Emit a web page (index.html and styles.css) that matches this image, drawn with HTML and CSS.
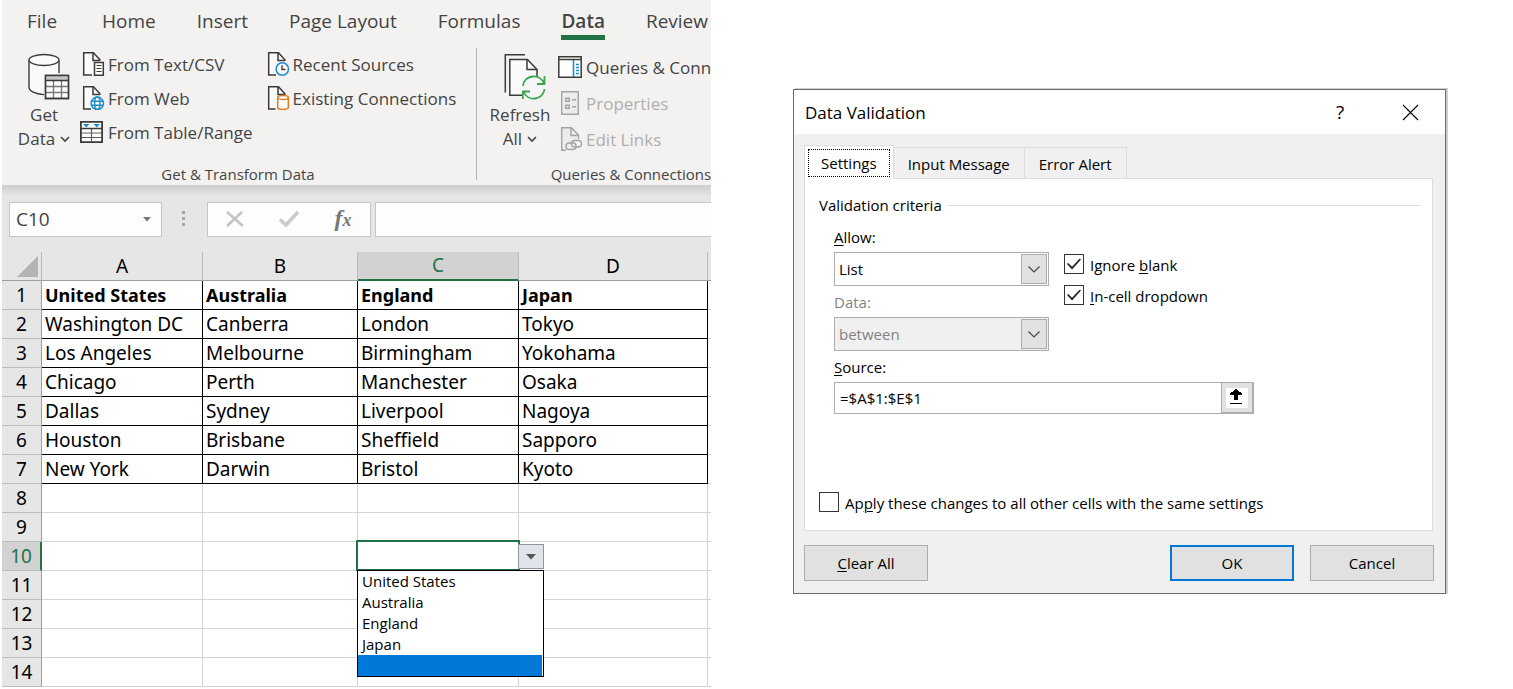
FILE: index.html
```html
<!DOCTYPE html>
<html lang="en">
<head>
<meta charset="utf-8">
<title>Data Validation</title>
<link rel="stylesheet" href="styles.css">
</head>
<body>
<main class="page">
  <section class="excel">
    <div class="ribbon">
      <nav class="tabs">
        <a class="tab" href="#">File</a>
        <a class="tab" href="#">Home</a>
        <a class="tab" href="#">Insert</a>
        <a class="tab" href="#">Page Layout</a>
        <a class="tab" href="#">Formulas</a>
        <a class="tab tab-active" href="#">Data</a>
        <a class="tab" href="#">Review</a>
      </nav>
      <div class="groups">
        <div class="group group-get">
          <div class="group-body">
            <button class="big-btn">
              <svg width="52" height="50" viewBox="-10 0 52 50" fill="none" stroke="#3b3a39" stroke-width="1.4">
                <path d="M1 7V31c0 6 7 9 16 10H30V7" fill="#fafafa" stroke="none"/>
                <path d="M1 7V34c0 4 6 7 15 7.600M31 7V20"/>
                <ellipse cx="16" cy="7" rx="15" ry="5.500" fill="#fafafa"/>
                <path d="M17.500 22.500H40.500V45.500H17.500Z" fill="#fff"/>
                <path d="M18 23H40V27H18Z" fill="#c8c6c4" stroke="none"/>
                <path d="M17.500 33.500H40.500M17.500 39.500H40.500M25.500 27V45M33.500 27V45" stroke="#797775"/>
                <path d="M17.500 22.500H40.500V45.500H17.500ZM17.500 27.500H40.500" />
              </svg>
              <span>Get</span>
              <span>Data <svg width="10" height="7" viewBox="0 0 10 7" fill="none" stroke="#444" stroke-width="1.600"><path d="M1 1L5 5L9 1"/></svg></span>
            </button>
            <div class="cmds">
              <button class="cmd">
                <svg width="26" height="24" viewBox="0 0 26 24" fill="none" stroke="#3b3a39" stroke-width="1.500">
                  <path d="M12 23H3.700V.800H13.500L20.500 8.500" fill="#fafafa"/><path d="M13 1V8.500H20"/>
                  <path d="M14.500 10.500H23.300V23.200H14.500Z" fill="#fff"/>
                  <path d="M16.500 13.500H21.500M16.500 16.500H21.500M16.500 19.500H21.500" stroke-width="1.200"/>
                </svg>From Text/CSV</button>
              <button class="cmd">
                <svg width="26" height="24" viewBox="0 0 26 24" fill="none" stroke="#3b3a39" stroke-width="1.500">
                  <path d="M11 23H3.700V.800H13.500L20.500 8.500" fill="#fafafa"/><path d="M13 1V8.500H20"/>
                  <g stroke="#1e8bcd" stroke-width="1.500"><circle cx="17.300" cy="17.300" r="6.200" fill="#fff"/><ellipse cx="17.300" cy="17.300" rx="2.700" ry="6.200"/><path d="M11.500 15.300H23M11.500 19.300H23"/></g>
                </svg>From Web</button>
              <button class="cmd">
                <svg width="26" height="24" viewBox="0 0 26 24" fill="none" stroke="#3b3a39" stroke-width="1.500">
                  <path d="M.8 1.800H22.200V22.200H.8Z" fill="#fff"/>
                  <path d="M1 13H22M1 17.500H22M11.500 9V22" stroke="#605e5c" stroke-width="1.200"/>
                  <path d="M.8 1.800H22.200V22.200H.8ZM.8 8.500H22"/>
                  <path d="M3 4H9.500L6.200 7.500ZM13.500 4H20L16.700 7.500Z" fill="#1e8bcd" stroke="none"/>
                </svg>From Table/Range</button>
            </div>
            <div class="cmds">
              <button class="cmd">
                <svg width="26" height="24" viewBox="0 0 26 24" fill="none" stroke="#3b3a39" stroke-width="1.500">
                  <path d="M11 23H3.700V.800H13.500L20.500 8.500" fill="#fafafa"/><path d="M13 1V8.500H20"/>
                  <circle cx="17.300" cy="17" r="6.200" fill="#fff" stroke="#1e8bcd"/><path d="M17 13.200V17.500H20.500" stroke-width="1.400"/>
                </svg>Recent Sources</button>
              <button class="cmd">
                <svg width="26" height="24" viewBox="0 0 26 24" fill="none" stroke="#3b3a39" stroke-width="1.500">
                  <path d="M10.500 23H3.700V.800H13.500L20.500 8.500" fill="#fafafa"/><path d="M13 1V8.500H20"/>
                  <g stroke="#e07b1a"><path d="M12.700 11.500V21.500c0 2.500 10.600 2.500 10.600 0V11.500" fill="#fff"/><ellipse cx="18" cy="11.500" rx="5.300" ry="2" fill="#fff"/></g>
                </svg>Existing Connections</button>
            </div>
          </div>
          <div class="group-label">Get &amp; Transform Data</div>
        </div>
        <div class="group group-queries">
          <div class="group-body">
            <button class="big-btn">
              <svg width="52" height="50" viewBox="-10 0 52 50" fill="none" stroke="#3b3a39" stroke-width="1.500">
                <path d="M21 1.700H1.300V39.500"/>
                <path d="M18 42.300H5.800V6.500H23.500L33 16.500V24" fill="#fafafa"/><path d="M23 6.500V16.500H33"/>
                <circle cx="29.500" cy="34.500" r="11" fill="#f6f6f6" stroke="none"/>
                <g stroke="#3aa655" stroke-width="1.800"><path d="M19 33c.5-11 17-13.500 21-2.500M40.500 23V31H33M40.500 36c-1 11-17 13.500-21 2.500M18.800 46V38.500H26"/></g>
              </svg>
              <span>Refresh</span>
              <span>All <svg width="10" height="7" viewBox="0 0 10 7" fill="none" stroke="#444" stroke-width="1.600"><path d="M1 1L5 5L9 1"/></svg></span>
            </button>
            <div class="cmds">
              <button class="cmd">
                <svg width="26" height="24" viewBox="0 0 26 24" fill="none" stroke="#3b3a39" stroke-width="1.500">
                  <path d="M.8 1.800H23.200V22.200H.8Z" fill="#fff"/><path d="M1 4.500H23"/>
                  <path d="M15.500 5V22" stroke="#1e8bcd" stroke-width="1.600"/><path d="M18 9.500H21M18 12.500H21M18 15.500H21M18 18.500H21" stroke="#1e8bcd"/>
                </svg>Queries &amp; Connections</button>
              <button class="cmd" disabled>
                <svg width="26" height="24" viewBox="0 0 26 24" fill="none" stroke="#a5a3a1" stroke-width="1.400">
                  <path d="M3.700 .8H20.300V23.200H3.700Z" fill="#ececec"/><path d="M7.700 7.200H11.300V10.200H7.700ZM7.700 14.200H11.300V17.200H7.700ZM14 8.700H18M14 15.700H18"/>
                </svg>Properties</button>
              <button class="cmd" disabled>
                <svg width="26" height="24" viewBox="0 0 26 24" fill="none" stroke="#a5a3a1" stroke-width="1.400">
                  <path d="M8 23.200H3.700V.800H13.500L20.500 8V12" fill="#ececec"/><path d="M13 1V8.500H20.500"/>
                  <rect x="8" y="16" width="10" height="6.500" rx="3.200"/><rect x="13.500" y="13.500" width="10" height="6.500" rx="3.200"/>
                </svg>Edit Links</button>
            </div>
          </div>
          <div class="group-label">Queries &amp; Connections</div>
        </div>
      </div>
    </div>

    <div class="formula-row">
      <div class="name-box">
        <input class="name-input" aria-label="Name box" value="C10">
        <svg width="8" height="5" viewBox="0 0 8 5"><path d="M0 0H8L4 4.500Z" fill="#777"/></svg>
      </div>
      <svg class="grip" width="4" height="16" viewBox="0 0 4 16" fill="#a6a6a6"><path d="M0 0H3V3H0ZM0 6H3V9H0ZM0 12H3V15H0Z"/></svg>
      <div class="fx-box">
        <button class="fx-btn" aria-label="Cancel entry"><svg width="20" height="18" viewBox="0 0 20 18" fill="none" stroke="#c3c3c3" stroke-width="2.500"><path d="M2 2L18 16M17 2L2 16"/></svg></button>
        <button class="fx-btn" aria-label="Enter"><svg width="20" height="18" viewBox="0 0 20 18" fill="none" stroke="#c9c9c9" stroke-width="3.500"><path d="M1 9.500L7 15L19 2"/></svg></button>
        <button class="fx-btn fx" aria-label="Insert function">f<span class="fx-x">x</span></button>
      </div>
      <input class="formula-input" aria-label="Formula bar">
    </div>

    <table class="sheet">
      <colgroup><col class="c-head"><col class="c-a"><col class="c-b"><col class="c-a"><col class="c-d"><col></colgroup>
      <thead>
        <tr><th class="corner"><svg width="21" height="21" viewBox="0 0 21 21"><path d="M21 0V21H0Z" fill="#b4b4b4"/></svg></th><th>A</th><th>B</th><th class="sel-col">C</th><th>D</th><th></th></tr>
      </thead>
      <tbody>
        <tr class="data bold"><th>1</th><td>United States</td><td>Australia</td><td>England</td><td>Japan</td><td></td></tr>
        <tr class="data"><th>2</th><td>Washington DC</td><td>Canberra</td><td>London</td><td>Tokyo</td><td></td></tr>
        <tr class="data"><th>3</th><td>Los Angeles</td><td>Melbourne</td><td>Birmingham</td><td>Yokohama</td><td></td></tr>
        <tr class="data"><th>4</th><td>Chicago</td><td>Perth</td><td>Manchester</td><td>Osaka</td><td></td></tr>
        <tr class="data"><th>5</th><td>Dallas</td><td>Sydney</td><td>Liverpool</td><td>Nagoya</td><td></td></tr>
        <tr class="data"><th>6</th><td>Houston</td><td>Brisbane</td><td>Sheffield</td><td>Sapporo</td><td></td></tr>
        <tr class="data"><th>7</th><td>New York</td><td>Darwin</td><td>Bristol</td><td>Kyoto</td><td></td></tr>
        <tr><th>8</th><td></td><td></td><td></td><td></td><td></td></tr>
        <tr><th>9</th><td></td><td></td><td></td><td></td><td></td></tr>
        <tr><th class="sel-row">10</th><td></td><td></td>
          <td class="active-cell">
            <div class="selection"></div>
            <button class="cell-drop" aria-label="Open list"><svg width="10" height="6" viewBox="0 0 10 6"><path d="M0 0H10L5 5.500Z" fill="#555"/></svg></button>
            <ul class="cell-list"><li>United States</li><li>Australia</li><li>England</li><li>Japan</li><li class="picked"></li></ul>
          </td><td></td><td></td></tr>
        <tr><th>11</th><td></td><td></td><td></td><td></td><td></td></tr>
        <tr><th>12</th><td></td><td></td><td></td><td></td><td></td></tr>
        <tr><th>13</th><td></td><td></td><td></td><td></td><td></td></tr>
        <tr><th>14</th><td></td><td></td><td></td><td></td><td></td></tr>
      </tbody>
    </table>
  </section>

  <section class="dialog" role="dialog" aria-labelledby="dlg-title">
    <header class="title-bar">
      <h1 class="title" id="dlg-title">Data Validation</h1>
      <button class="win-btn">?</button>
      <button class="win-btn" aria-label="Close"><svg width="17" height="17" viewBox="0 0 17 17" fill="none" stroke="#000" stroke-width="1.100"><path d="M1 1L16 16M16 1L1 16"/></svg></button>
    </header>
    <form class="dlg-body">
      <div class="dlg-tabs" role="tablist">
        <button type="button" class="dlg-tab dlg-tab-active" role="tab"><span class="focus">Settings</span></button>
        <button type="button" class="dlg-tab" role="tab">Input Message</button>
        <button type="button" class="dlg-tab" role="tab">Error Alert</button>
      </div>
      <div class="panel">
        <div class="legend">Validation criteria</div>
        <div class="criteria">
          <div class="fields">
            <label class="lbl" for="allow"><u>A</u>llow:</label>
            <div class="combo">
              <select class="combo-select" id="allow"><option>List</option></select>
              <span class="combo-arrow"><svg width="12" height="7" viewBox="0 0 12 7" fill="none" stroke="#444" stroke-width="1.200"><path d="M.5 .5L6 6L11.500 .5"/></svg></span>
            </div>
            <label class="lbl lbl-off" for="data">Data:</label>
            <div class="combo">
              <select class="combo-select" id="data" disabled><option>between</option></select>
              <span class="combo-arrow"><svg width="12" height="7" viewBox="0 0 12 7" fill="none" stroke="#444" stroke-width="1.200"><path d="M.5 .5L6 6L11.500 .5"/></svg></span>
            </div>
          </div>
          <div class="checks">
            <label class="check"><input class="box" type="checkbox" checked><span class="check-text">Ignore <u>b</u>lank</span></label>
            <label class="check"><input class="box" type="checkbox" checked><span class="check-text"><u>I</u>n-cell dropdown</span></label>
          </div>
        </div>
        <div class="source">
          <label class="lbl" for="source"><u>S</u>ource:</label>
          <div class="source-row">
            <input class="source-input" id="source" value="=$A$1:$E$1">
            <button type="button" class="pick" aria-label="Collapse dialog"><svg width="22" height="20" viewBox="0 0 22 20"><path d="M0 0H22V20H0Z" fill="#fff"/><path d="M9 1H11V2H12V3H13V4H15V5H16V7H12V12H8V7H4V5H5V4H7V3H8V2H9ZM4 15H16V16H4Z" fill="#000"/></svg></button>
          </div>
        </div>
        <label class="check apply"><input class="box" type="checkbox"><span class="check-text">Ap<u>p</u>ly these changes to all other cells with the same settings</span></label>
      </div>
      <div class="actions">
        <button type="button" class="btn btn-left"><span><u>C</u>lear All</span></button>
        <button type="button" class="btn btn-default">OK</button>
        <button type="button" class="btn">Cancel</button>
      </div>
    </form>
  </section>
</main>
</body>
</html>
```
FILE: styles.css
```css
* { box-sizing: border-box; }
body {
  margin: 0;
  background: #fff;
  color: #000;
  font-family: "Open Sans", "Noto Sans", sans-serif;
  font-size: 15px;
}
button, input, select { font: inherit; color: inherit; margin: 0; }
button { background: none; border: 0; padding: 0; white-space: nowrap; }
svg { flex: none; }
u { text-underline-offset: 2px; text-decoration-thickness: 1px; }

.page {
  display: grid;
  grid-template-columns: 709fr 653fr;
  align-items: start;
  gap: 82px;
  padding: 0 67px 0 2px;
}

/* Spreadsheet */
.excel { min-width: 0; overflow: hidden; }
.ribbon { background: #f3f2f1; color: #444; border-bottom: 1px solid #d2d2d2; }
.tabs { display: flex; gap: 41px; padding: 0 25px; height: 40px; }
.tab {
  flex: none;
  color: inherit;
  text-decoration: none;
  font-size: 19px;
  line-height: 42px;
  height: 40px;
}
.tab:first-child { margin-right: 4px; }
.tab-active { font-weight: 600; border-bottom: 5px solid #217346; }
.groups { display: flex; padding: 8px 0 5px; }
.group { flex: none; height: 132px; display: flex; flex-direction: column; justify-content: space-between; }
.group-get { width: 475px; border-right: 1px solid #b3b0ad; padding-left: 14px; }
.group-queries { padding-left: 13px; }
.group-body { display: flex; align-items: flex-start; gap: 8px; }
.group-get .group-label { padding-right: 16px; }
.group-label { font-size: 15px; line-height: 12px; text-align: center; }
.big-btn {
  display: flex;
  flex-direction: column;
  align-items: center;
  width: 56px;
  padding-top: 5px;
  font-size: 17px;
  line-height: 24px;
}
.group-queries .big-btn { width: 60px; }
.big-btn > span { display: flex; align-items: center; gap: 5px; }
.cmds { display: flex; flex-direction: column; margin-right: 4px; }
.cmd { display: flex; align-items: center; gap: 2px; height: 34px; padding-bottom: 2px; font-size: 17px; }
.group-queries .cmd { height: 36px; padding: 2px 0 0; }
.cmd:disabled { color: #b1afad; }

.formula-row {
  display: flex;
  align-items: center;
  height: 66px;
  padding-left: 7px;
  background: linear-gradient(#cfcfcf, #e6e6e6 10px);
}
.name-box {
  display: flex;
  align-items: center;
  width: 153px;
  height: 35px;
  padding-right: 10px;
  background: #fdfdfd;
  border: 1px solid #c6c6c6;
}
.name-input { flex: 1; min-width: 0; border: 0; background: none; padding: 0 6px; font-size: 19px; color: #444; }
.grip { margin: 0 21px 0 20px; }
.fx-box {
  display: flex;
  align-items: center;
  justify-content: space-around;
  width: 164px;
  height: 35px;
  background: #fdfdfd;
  border: 1px solid #c6c6c6;
}
.fx-btn { display: flex; justify-content: center; width: 30px; }
.fx { font: italic bold 24px "Liberation Serif", serif; color: #777; line-height: 28px; align-items: baseline; }
.fx-x { font-size: 18px; }
.formula-input {
  flex: 1;
  min-width: 0;
  height: 35px;
  margin-left: 4px;
  background: #fdfdfd;
  border: 1px solid #c6c6c6;
  border-right: 0;
}

.sheet { width: 100%; table-layout: fixed; border-collapse: separate; border-spacing: 0; font-family: "Noto Sans", sans-serif; }
.c-head { width: 40px; }
.c-a { width: 161px; }
.c-b { width: 155px; }
.c-d { width: 189px; }
.sheet th, .sheet td {
  height: 29px;
  padding: 0;
  font-size: 19px;
  line-height: 28px;
  white-space: nowrap;
  border-right: 1px solid #d4d4d4;
  border-bottom: 1px solid #d4d4d4;
}
.sheet tr > :last-child { border-right: 0; }
.sheet td { padding-left: 3px; text-align: left; }
.sheet tr > td:last-child { padding: 0; }
.sheet th { background: #e6e6e6; font-weight: 400; }
.sheet thead th { border-color: #9e9e9e; border-right-color: #bababa; line-height: 27px; }
.corner svg { display: block; margin-left: 15px; }
.sheet thead .sel-col { background: #d2d2d2; color: #217346; border-bottom: 2px solid #217346; }
.sheet tbody th { border-right-color: #9e9e9e; border-bottom-color: #bcbcbc; }
.sheet tbody .sel-row { background: #d2d2d2; color: #217346; border-right: 2px solid #217346; }
.data td:not(:last-child) { border-color: #000; }
.sheet .bold td { font-weight: 700; font-size: 18px; }

.active-cell { position: relative; }
.selection {
  position: absolute;
  inset: -2px -2px -1px -2px;
  border: 2px solid #217346;
}
.cell-drop {
  position: absolute;
  left: 100%;
  top: 2px;
  display: flex;
  align-items: center;
  justify-content: center;
  width: 26px;
  height: 25px;
  background: #dfe3ea;
  border: 1px solid #8f959f;
}
.cell-list {
  position: absolute;
  top: 28px;
  left: -1px;
  width: 187px;
  margin: 0;
  padding: 0 1px 0 0;
  list-style: none;
  background: #fff;
  border: 1px solid #000;
  font-family: "Open Sans", sans-serif;
  font-size: 15px;
  line-height: 21px;
  z-index: 1;
}
.cell-list li { height: 21px; padding-left: 4px; }
.cell-list .picked { background: #0078d7; }

/* Dialog */
.dialog {
  margin-top: 89px;
  min-width: 0;
  background: #f0f0f0;
  border: 1px solid #6b6b6b;
  box-shadow: 2px 0 #cfcfcf, 2px -1px #cfcfcf;
}
.title-bar { display: flex; align-items: center; height: 44px; padding-left: 11px; background: #fff; }
.title { flex: 1; margin: 0; font-size: 17px; font-weight: 400; }
.win-btn { display: flex; align-items: center; justify-content: center; width: 70px; height: 44px; font-size: 19px; }
.dlg-body { padding: 11px 11px 12px 10px; }
.dlg-tabs { display: flex; align-items: flex-end; }
.dlg-tab {
  height: 31px;
  padding: 2px 14px 0;
  border: 1px solid #dcdcdc;
  border-left: 0;
  border-bottom: 0;
  line-height: 24px;
}
.dlg-tab-active {
  position: relative;
  z-index: 1;
  height: 34px;
  margin-bottom: -1px;
  padding: 3px;
  border-left: 1px solid #dcdcdc;
  background: #fff;
}
.focus { display: block; padding: 0 12px; line-height: 26px; border: 1px dotted #000; }
.panel { margin-right: 1px; background: #fff; border: 1px solid #dcdcdc; padding: 14px 12px 18px 14px; }
.legend { display: flex; align-items: center; gap: 5px; line-height: 24px; margin-bottom: 9px; }
.legend::after { content: ""; flex: 1; height: 1px; background: #dcdcdc; }
.criteria { display: flex; gap: 15px; padding-left: 15px; }
.fields { width: 215px; }
.lbl { display: block; line-height: 22px; margin-bottom: 4px; }
.lbl-off { color: #838383; }
.combo { position: relative; height: 34px; margin-bottom: 5px; }
.combo-select {
  appearance: none;
  width: 100%;
  height: 34px;
  padding: 0 30px 0 4px;
  background: #fff;
  border: 1px solid #adadad;
  border-radius: 0;
}
.combo-select:disabled { background: #f0f0f0; color: #838383; opacity: 1; }
.combo-arrow {
  position: absolute;
  top: 2px;
  right: 2px;
  bottom: 2px;
  width: 26px;
  display: flex;
  align-items: center;
  justify-content: center;
  background: #e1e1e1;
  border: 1px solid #adadad;
  pointer-events: none;
}
.checks { display: flex; flex-direction: column; gap: 11px; padding-top: 28px; }
.check { display: flex; align-items: center; gap: 6px; height: 20px; white-space: nowrap; }
.check-text { padding-top: 2px; }
.box {
  appearance: none;
  flex: none;
  display: grid;
  place-items: center;
  width: 20px;
  height: 20px;
  background: #fff;
  border: 1px solid #333;
}
.box:checked::before {
  content: "";
  width: 14px;
  height: 11px;
  background: #222;
  clip-path: polygon(0 50%, 9% 40%, 36% 76%, 91% 0, 100% 9%, 36% 100%);
}
.source { padding-left: 15px; }
.source-row { display: flex; max-width: 420px; height: 32px; }
.source-input { flex: 1; min-width: 0; padding: 0 5px; background: #fff; border: 1px solid #adadad; border-right: 0; }
.pick {
  display: flex;
  align-items: center;
  justify-content: center;
  width: 33px;
  background: #e1e1e1;
  border: 1px solid #adadad;
  border-right-width: 2px;
  border-bottom-width: 2px;
}
.apply { margin-top: 78px; }
.actions { display: flex; gap: 16px; padding-top: 14px; }
.btn { width: 124px; height: 36px; background: #e1e1e1; border: 1px solid #adadad; }
.btn-left { margin-right: auto; }
.btn-default { border: 2px solid #0078d7; }
```
